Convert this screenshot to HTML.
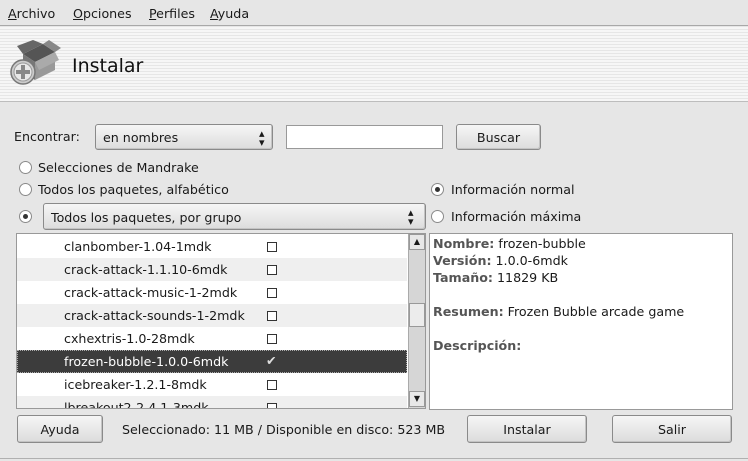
<!DOCTYPE html>
<html><head><meta charset="utf-8"><style>
*{margin:0;padding:0;box-sizing:border-box}
body{width:748px;height:461px;background:#e6e6e6;font-family:"DejaVu Sans","Liberation Sans",sans-serif;font-size:12.65px;color:#1a1a1a;position:relative;overflow:hidden}
.a{position:absolute;white-space:nowrap}
.menu{left:0;top:0;width:748px;height:26px;background:#e6e6e6;border-bottom:1px solid #a8a8a8}
.menu span{position:absolute;top:6px}
.hdr{left:0;top:27px;width:748px;height:75px;background:repeating-linear-gradient(#f6f6f6 0 2px,#e6e6e6 2px 3px);border-bottom:1px solid #bdbdbd}
.btn{position:absolute;border:1px solid #8a8a8a;border-radius:3px;background:linear-gradient(#f6f6f6,#dcdcdc);text-align:center;box-shadow:inset -1px -1px 0 #c4c4c4}
.radio{position:absolute;width:13px;height:13px;border:1px solid #8a8a8a;border-radius:50%;background:#fff}
.radio.on::after{content:"";position:absolute;left:3px;top:3px;width:5px;height:5px;border-radius:50%;background:#333}
.row{position:absolute;left:0;width:390px;height:23px}
.row .t{position:absolute;left:47px;top:4px}
.cb{position:absolute;left:250px;top:7px;width:10px;height:10px;border:1px solid #333;background:#fff}
.info b{color:#555}
</style></head><body>
<div class="a menu">
<span style="left:8px"><u>A</u>rchivo</span>
<span style="left:73px"><u>O</u>pciones</span>
<span style="left:149px"><u>P</u>erfiles</span>
<span style="left:210px"><u>A</u>yuda</span>
</div>
<div class="a hdr">
<svg style="position:absolute;left:9px;top:13px" width="52" height="46" viewBox="0 0 52 46">
<polygon points="14,14 34,4 46,12 26,22" fill="#555"/>
<polygon points="14,14 26,22 26,40 14,32" fill="#777"/>
<polygon points="26,22 46,12 46,30 26,40" fill="#999"/>
<polygon points="14,14 8,6 24,0 34,4" fill="#666"/>
<polygon points="34,4 46,12 52,8 40,0" fill="#888"/>
<polygon points="26,22 46,12 50,20 30,30" fill="#aaa"/>
<circle cx="14" cy="32" r="12" fill="#ccc" stroke="#777" stroke-width="1.5"/>
<circle cx="14" cy="32" r="9" fill="#e8e8e8" stroke="#999"/>
<rect x="12" y="25" width="4" height="14" fill="#888"/>
<rect x="7" y="30" width="14" height="4" fill="#888"/>
</svg>
<span class="a" style="left:72px;top:28px;font-size:19px;color:#111">Instalar</span>
</div>
<span class="a" style="left:14px;top:129px">Encontrar:</span>
<div class="btn" style="left:95px;top:124px;width:178px;height:26px;text-align:left;padding:5px 0 0 7px">en nombres<span class="a" style="left:163px;top:4px;font-size:11px;line-height:9px">▴<br>▾</span></div>
<div class="a" style="left:286px;top:125px;width:157px;height:24px;background:#fff;border:1px solid #999"></div>
<div class="btn" style="left:456px;top:124px;width:85px;height:26px;padding-top:5px">Buscar</div>
<div class="radio" style="left:19px;top:161px"></div><span class="a" style="left:38px;top:160px">Selecciones de Mandrake</span>
<div class="radio" style="left:19px;top:183px"></div><span class="a" style="left:38px;top:182px">Todos los paquetes, alfabético</span>
<div class="radio on" style="left:19px;top:210px"></div>
<div class="btn" style="left:43px;top:203px;width:383px;height:27px;text-align:left;padding:6px 0 0 7px">Todos los paquetes, por grupo<span class="a" style="left:364px;top:4px;font-size:11px;line-height:9px">▴<br>▾</span></div>
<div class="radio on" style="left:431px;top:183px"></div><span class="a" style="left:451px;top:182px">Información normal</span>
<div class="radio" style="left:431px;top:210px"></div><span class="a" style="left:451px;top:209px">Información máxima</span>
<div class="a" style="left:16px;top:233px;width:410px;height:176px;border:1px solid #999;background:#fff;overflow:hidden">
<div class="row" style="top:1px;background:#fff"><span class="t">clanbomber-1.04-1mdk</span><span class="cb"></span></div>
<div class="row" style="top:24px;background:#efefef"><span class="t">crack-attack-1.1.10-6mdk</span><span class="cb"></span></div>
<div class="row" style="top:47px;background:#fff"><span class="t">crack-attack-music-1-2mdk</span><span class="cb"></span></div>
<div class="row" style="top:70px;background:#efefef"><span class="t">crack-attack-sounds-1-2mdk</span><span class="cb"></span></div>
<div class="row" style="top:93px;background:#fff"><span class="t">cxhextris-1.0-28mdk</span><span class="cb"></span></div>
<div class="row" style="top:116px;background:#3c3c3c;color:#fff;outline:1px dotted #aaa;outline-offset:-1px"><span class="t">frozen-bubble-1.0.0-6mdk</span><span class="a" style="left:249px;top:3px;color:#ddd">✔</span></div>
<div class="row" style="top:139px;background:#fff"><span class="t">icebreaker-1.2.1-8mdk</span><span class="cb"></span></div>
<div class="row" style="top:162px;background:#efefef"><span class="t">lbreakout2-2.4.1-3mdk</span><span class="cb"></span></div>
<div class="a" style="left:391px;top:0;width:17px;height:174px;background:#d6d6d6;border-left:1px solid #aaa">
<div class="a" style="left:0;top:0;width:16px;height:16px;background:#e8e8e8;border:1px solid #999;font-size:8px;text-align:center;line-height:14px">▲</div>
<div class="a" style="left:0;top:69px;width:16px;height:24px;background:#ececec;border:1px solid #999"></div>
<div class="a" style="left:0;top:157px;width:16px;height:16px;background:#e8e8e8;border:1px solid #999;font-size:8px;text-align:center;line-height:14px">▼</div>
</div>
</div>
<div class="a info" style="left:429px;top:233px;width:304px;height:177px;background:#fff;border:1px solid #999;padding:1px 0 0 3px;line-height:17px;white-space:normal">
<b>Nombre:</b> frozen-bubble<br><b>Versión:</b> 1.0.0-6mdk<br><b>Tamaño:</b> 11829 KB<br><br><b>Resumen:</b> Frozen Bubble arcade game<br><br><b>Descripción:</b>
</div>
<div class="btn" style="left:17px;top:415px;width:86px;height:28px;padding-top:6px">Ayuda</div>
<span class="a" style="left:122px;top:422px">Seleccionado: 11 MB / Disponible en disco: 523 MB</span>
<div class="btn" style="left:467px;top:415px;width:120px;height:28px;padding-top:6px">Instalar</div>
<div class="btn" style="left:612px;top:415px;width:120px;height:28px;padding-top:6px">Salir</div>
<div class="a" style="left:0;top:458px;width:748px;height:1px;background:#b0b0b0"></div>
</body></html>
